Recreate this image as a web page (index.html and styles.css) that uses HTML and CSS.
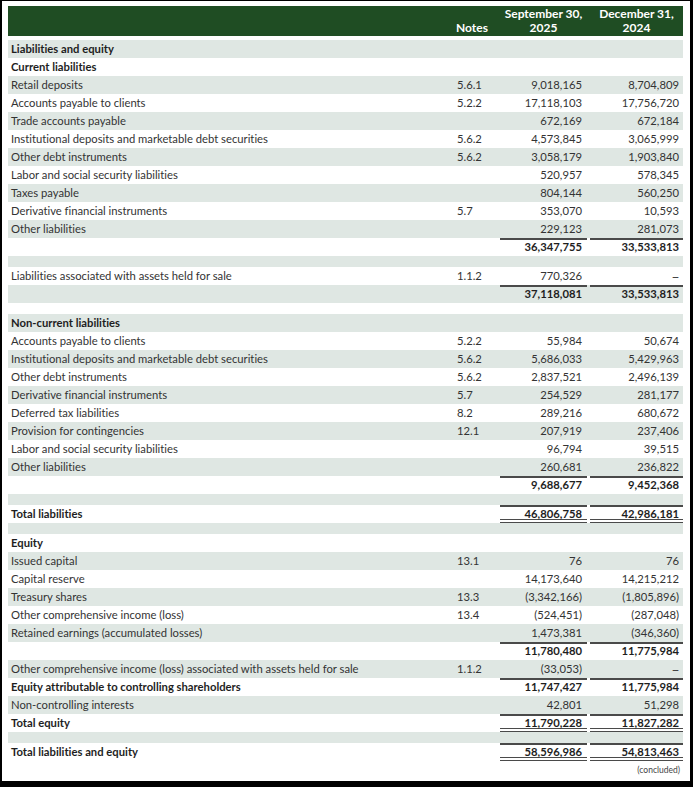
FILE: index.html
```html
<!DOCTYPE html>
<html lang="en">
<head>
<meta charset="utf-8">
<title>Liabilities and equity</title>
<link rel="stylesheet" href="styles.css">
</head>
<body>
<div class="page">
  <div class="head">
    <span class="lbl"></span>
    <span class="note">Notes</span>
    <span class="hv">September 30,<br>2025</span>
    <span class="hv">December 31,<br>2024</span>
  </div>
  <div class="rows">
    <div class="row b"><span class="lbl">Liabilities and equity</span><span class="note"></span><span class="v"></span><span class="v"></span></div>
    <div class="row b"><span class="lbl">Current liabilities</span><span class="note"></span><span class="v"></span><span class="v"></span></div>
    <div class="row"><span class="lbl">Retail deposits</span><span class="note">5.6.1</span><span class="v">9,018,165</span><span class="v">8,704,809</span></div>
    <div class="row"><span class="lbl">Accounts payable to clients</span><span class="note">5.2.2</span><span class="v">17,118,103</span><span class="v">17,756,720</span></div>
    <div class="row"><span class="lbl">Trade accounts payable</span><span class="note"></span><span class="v">672,169</span><span class="v">672,184</span></div>
    <div class="row"><span class="lbl">Institutional deposits and marketable debt securities</span><span class="note">5.6.2</span><span class="v">4,573,845</span><span class="v">3,065,999</span></div>
    <div class="row"><span class="lbl">Other debt instruments</span><span class="note">5.6.2</span><span class="v">3,058,179</span><span class="v">1,903,840</span></div>
    <div class="row"><span class="lbl">Labor and social security liabilities</span><span class="note"></span><span class="v">520,957</span><span class="v">578,345</span></div>
    <div class="row"><span class="lbl">Taxes payable</span><span class="note"></span><span class="v">804,144</span><span class="v">560,250</span></div>
    <div class="row"><span class="lbl">Derivative financial instruments</span><span class="note">5.7</span><span class="v">353,070</span><span class="v">10,593</span></div>
    <div class="row"><span class="lbl">Other liabilities</span><span class="note"></span><span class="v">229,123</span><span class="v">281,073</span></div>
    <div class="row b t"><span class="lbl"></span><span class="note"></span><span class="v">36,347,755</span><span class="v">33,533,813</span></div>
    <div class="row e"></div>
    <div class="row"><span class="lbl">Liabilities associated with assets held for sale</span><span class="note">1.1.2</span><span class="v">770,326</span><span class="v dash">–</span></div>
    <div class="row b t"><span class="lbl"></span><span class="note"></span><span class="v">37,118,081</span><span class="v">33,533,813</span></div>
    <div class="row e"></div>
    <div class="row b"><span class="lbl">Non-current liabilities</span><span class="note"></span><span class="v"></span><span class="v"></span></div>
    <div class="row"><span class="lbl">Accounts payable to clients</span><span class="note">5.2.2</span><span class="v">55,984</span><span class="v">50,674</span></div>
    <div class="row"><span class="lbl">Institutional deposits and marketable debt securities</span><span class="note">5.6.2</span><span class="v">5,686,033</span><span class="v">5,429,963</span></div>
    <div class="row"><span class="lbl">Other debt instruments</span><span class="note">5.6.2</span><span class="v">2,837,521</span><span class="v">2,496,139</span></div>
    <div class="row"><span class="lbl">Derivative financial instruments</span><span class="note">5.7</span><span class="v">254,529</span><span class="v">281,177</span></div>
    <div class="row"><span class="lbl">Deferred tax liabilities</span><span class="note">8.2</span><span class="v">289,216</span><span class="v">680,672</span></div>
    <div class="row"><span class="lbl">Provision for contingencies</span><span class="note">12.1</span><span class="v">207,919</span><span class="v">237,406</span></div>
    <div class="row"><span class="lbl">Labor and social security liabilities</span><span class="note"></span><span class="v">96,794</span><span class="v">39,515</span></div>
    <div class="row"><span class="lbl">Other liabilities</span><span class="note"></span><span class="v">260,681</span><span class="v">236,822</span></div>
    <div class="row b t"><span class="lbl"></span><span class="note"></span><span class="v">9,688,677</span><span class="v">9,452,368</span></div>
    <div class="row e"></div>
    <div class="row b t d"><span class="lbl">Total liabilities</span><span class="note"></span><span class="v">46,806,758</span><span class="v">42,986,181</span></div>
    <div class="row e"></div>
    <div class="row b"><span class="lbl">Equity</span><span class="note"></span><span class="v"></span><span class="v"></span></div>
    <div class="row"><span class="lbl">Issued capital</span><span class="note">13.1</span><span class="v">76</span><span class="v">76</span></div>
    <div class="row"><span class="lbl">Capital reserve</span><span class="note"></span><span class="v">14,173,640</span><span class="v">14,215,212</span></div>
    <div class="row"><span class="lbl">Treasury shares</span><span class="note">13.3</span><span class="v">(3,342,166)</span><span class="v">(1,805,896)</span></div>
    <div class="row"><span class="lbl">Other comprehensive income (loss)</span><span class="note">13.4</span><span class="v">(524,451)</span><span class="v">(287,048)</span></div>
    <div class="row"><span class="lbl">Retained earnings (accumulated losses)</span><span class="note"></span><span class="v">1,473,381</span><span class="v">(346,360)</span></div>
    <div class="row b t"><span class="lbl"></span><span class="note"></span><span class="v">11,780,480</span><span class="v">11,775,984</span></div>
    <div class="row"><span class="lbl">Other comprehensive income (loss) associated with assets held for sale</span><span class="note">1.1.2</span><span class="v">(33,053)</span><span class="v dash">–</span></div>
    <div class="row b t"><span class="lbl">Equity attributable to controlling shareholders</span><span class="note"></span><span class="v">11,747,427</span><span class="v">11,775,984</span></div>
    <div class="row"><span class="lbl">Non-controlling interests</span><span class="note"></span><span class="v">42,801</span><span class="v">51,298</span></div>
    <div class="row b t d"><span class="lbl">Total equity</span><span class="note"></span><span class="v">11,790,228</span><span class="v">11,827,282</span></div>
    <div class="row e"></div>
    <div class="row b t d"><span class="lbl">Total liabilities and equity</span><span class="note"></span><span class="v">58,596,986</span><span class="v">54,813,463</span></div>
  </div>
  <div class="foot">(concluded)</div>
</div>
</body>
</html>
```

FILE: styles.css
```css
html, body {
  margin: 0;
  padding: 0;
}

body {
  background: #000;
  width: 693px;
  height: 787px;
  overflow: hidden;
  font-family: Lato, "Open Sans", sans-serif;
  font-variant-ligatures: none;
}

.page {
  width: 688px;
  height: 780px;
  margin: 1px 3px 0 2px;
  padding: 5px 7px 0 6px;
  box-sizing: border-box;
  background: #fff;
}

.head,
.row {
  display: grid;
  grid-template-columns: 1fr 42px 87px 93px;
  column-gap: 3px;
}

.head {
  height: 30px;
  box-sizing: border-box;
  padding-bottom: 1px;
  margin-bottom: 4px;
  background: #1f4d23;
  color: #fff;
  font-weight: 700;
  font-size: 12px;
  line-height: 14px;
  align-items: end;
}

.head .hv {
  text-align: center;
}

.head .note {
  padding-left: 1px;
}

.row {
  height: 18px;
  line-height: 18px;
  font-size: 11.25px;
  color: #333;
}

.rows .row:nth-child(odd) {
  background: #dfe7e3;
}

.row.e {
  height: 11px;
}

.row.b {
  font-weight: 700;
  color: #1e1e1e;
}

.lbl {
  padding-left: 3px;
  white-space: nowrap;
}

.note {
  padding-left: 2px;
}

.v {
  text-align: right;
  padding-right: 5px;
  white-space: nowrap;
}

.v:last-child {
  padding-right: 4px;
}

.v.dash {
  color: #444;
  font-size: 14px;
  font-family: "DejaVu Sans", sans-serif;
}

.row.t .v {
  box-shadow: inset 0 2px #4a4a4a;
}

.row.t.d .v {
  box-shadow: inset 0 2px #4a4a4a, inset 0 -1px #4a4a4a, inset 0 -3px #fff, inset 0 -4px #4a4a4a;
}

.foot {
  text-align: right;
  padding-right: 3px;
  margin-top: 3px;
  font-size: 8.5px;
  line-height: 12px;
  color: #444;
}
```
